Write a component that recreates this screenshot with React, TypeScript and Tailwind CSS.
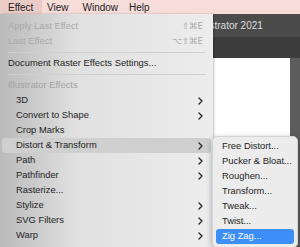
import React from "react";

const Chevron = () => (
  <svg width="5" height="8" viewBox="0 0 5 8" className="shrink-0">
    <path d="M1 1 L4 4 L1 7" fill="none" stroke="#2a2a2a" strokeWidth="1.4" strokeLinecap="round" strokeLinejoin="round" />
  </svg>
);

type Item = { label: string; sub?: boolean; active?: boolean };

const effects: Item[] = [
  { label: "3D", sub: true },
  { label: "Convert to Shape", sub: true },
  { label: "Crop Marks" },
  { label: "Distort & Transform", sub: true, active: true },
  { label: "Path", sub: true },
  { label: "Pathfinder", sub: true },
  { label: "Rasterize..." },
  { label: "Stylize", sub: true },
  { label: "SVG Filters", sub: true },
  { label: "Warp", sub: true },
];

const subItems = [
  "Free Distort...",
  "Pucker & Bloat...",
  "Roughen...",
  "Transform...",
  "Tweak...",
  "Twist...",
  "Zig Zag...",
];

export default function App() {
  return (
    <div
      className="relative w-[300px] h-[247px] overflow-hidden bg-[#5a5a5a]"
      style={{ fontFamily: '"Liberation Sans", Arial, sans-serif' }}
    >
      {/* Menu bar */}
      <div className="flex h-[14px] items-center bg-[#f6ddd9] text-[10px] text-[#222]">
        <div className="flex h-full w-[42px] items-center bg-[#ebcbc7] pl-[8px]">Effect</div>
        <div className="pl-[5px]">View</div>
        <div className="pl-[14px]">Window</div>
        <div className="pl-[11px]">Help</div>
      </div>

      {/* Application window behind */}
      <div className="flex h-[23px] items-center bg-[#4b4b4b] pl-[165px] text-[10px] text-[#dedede]">
        Adobe Illustrator 2021
      </div>
      <div className="h-[21px] bg-[#3c3c3c]" />
      <div className="flex h-[189px]">
        <div className="w-[290px] bg-white" />
        <div className="flex-1 bg-[#5c5c5c]" />
      </div>

      {/* Main menu */}
      <div className="absolute left-0 top-[14px] flex h-[233px] w-[213px] flex-col bg-gradient-to-r from-[#bababa] via-[#e0e0e0] via-35% to-[#ededed] pt-[5px] text-[9.4px] text-[#1e1e1e] shadow-[1px_0_2px_rgba(0,0,0,0.25)]">
        <div className="flex h-[15px] items-center justify-between pl-[8px] pr-[10px] text-[#a9a9a9]">
          <span>Apply Last Effect</span>
          <span className="text-[8.5px]" style={{ fontFamily: '"DejaVu Sans", sans-serif' }}>⇧⌘E</span>
        </div>
        <div className="flex h-[15px] items-center justify-between pl-[8px] pr-[10px] text-[#a9a9a9]">
          <span>Last Effect</span>
          <span className="text-[8.5px]" style={{ fontFamily: '"DejaVu Sans", sans-serif' }}>⌥⇧⌘E</span>
        </div>
        <div className="flex h-[7px] items-center px-[8px]">
          <div className="h-px w-full bg-[#cfcfcf]" />
        </div>
        <div className="flex h-[15px] items-center pl-[8px]">Document Raster Effects Settings...</div>
        <div className="flex h-[7px] items-center px-[8px]">
          <div className="h-px w-full bg-[#cfcfcf]" />
        </div>
        <div className="flex h-[15px] items-center pl-[8px] text-[#a3a3a3]">Illustrator Effects</div>
        {effects.map((it) => (
          <div
            key={it.label}
            className={`mx-[2px] flex h-[15px] items-center justify-between rounded-[4px] pl-[14px] pr-[8px] ${
              it.active ? "bg-[#cfcfcf]" : ""
            }`}
          >
            <span>{it.label}</span>
            {it.sub ? <Chevron /> : null}
          </div>
        ))}
      </div>

      {/* Submenu */}
      <div className="absolute left-[212px] top-[136px] flex h-[112px] w-[86px] flex-col rounded-[5px] border border-[#d4d4d4] bg-[#ececec] px-[3px] pt-[2px] text-[9.4px] text-[#1e1e1e] shadow-[0_2px_6px_rgba(0,0,0,0.3)]">
        {subItems.map((s) => (
          <div
            key={s}
            className={`flex h-[15px] items-center rounded-[3px] pl-[6px] ${
              s === "Zig Zag..." ? "bg-[#3d8ef7] text-white" : ""
            }`}
          >
            {s}
          </div>
        ))}
      </div>
    </div>
  );
}
